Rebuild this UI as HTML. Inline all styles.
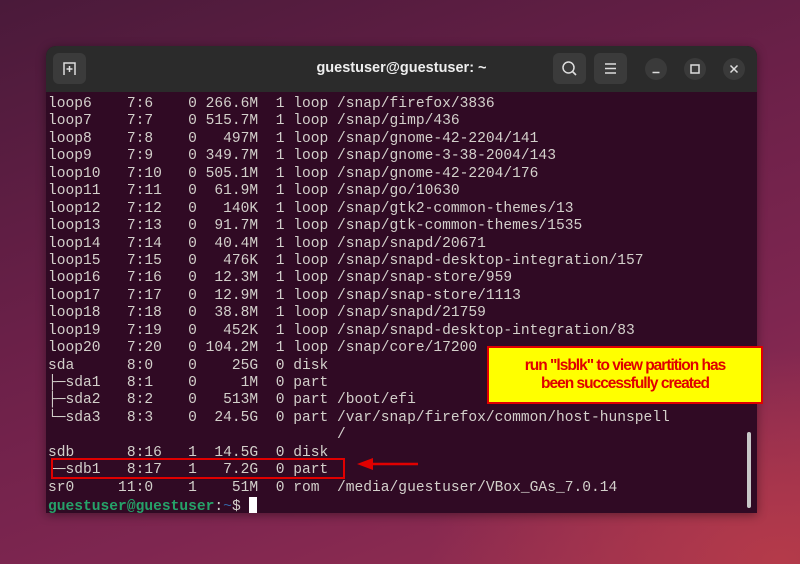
<!DOCTYPE html>
<html><head><meta charset="utf-8"><style>
html,body{margin:0;padding:0;width:800px;height:564px;overflow:hidden}
body{background:
radial-gradient(ellipse 300px 260px at 260px 280px,#7a2a5e 0%,rgba(122,42,94,0) 70%),
radial-gradient(ellipse 500px 300px at 780px 560px,#b43a4a 0%,rgba(180,58,74,0) 70%),
linear-gradient(160deg,#4a1a3a 0%,#6a2048 40%,#7e2650 70%,#9a3050 100%);position:relative;font-family:"Liberation Sans",sans-serif}
.win{position:absolute;left:46px;top:46px;width:711px;height:467px;background:#300a24;border-radius:10px 10px 0 0;overflow:hidden;box-shadow:0 2px 10px rgba(0,0,0,.4)}
.hdr{position:absolute;left:0;top:0;width:711px;height:46px;background:#2b2b2b}
.btn{position:absolute;top:7px;width:33px;height:31px;background:#3b3b3b;border-radius:6px}
.circ{position:absolute;top:12px;width:22px;height:22px;border-radius:50%;background:#3a3a3a}
.title{position:absolute;left:0;right:0;top:14px;text-align:center;color:#eee;font-weight:bold;font-size:14.5px}
pre{position:absolute;left:2px;top:50px;margin:0;font-family:"Liberation Mono","DejaVu Sans Mono",monospace;font-size:14.6px;line-height:17.43px;color:#d3d0cb}
.g{color:#26a269;font-weight:bold}.b{color:#3465a4}
.cur{display:inline-block;width:8px;height:16px;background:#fff;vertical-align:-3px}
.sb{position:absolute;left:701px;top:386px;width:4px;height:76px;background:#c8c8c8;border-radius:2px}
.note{position:absolute;left:487px;top:346px;width:272px;height:45px;background:#ffff00;border:2px solid #e00000;color:#e00000;font-weight:bold;font-size:15.5px;text-align:center;line-height:18px;padding-top:9px;letter-spacing:-1px;box-sizing:content-box}
.rect{position:absolute;left:51px;top:458px;width:290px;height:17px;border:2px solid #e00000}
</style></head><body>
<div class="win">
<div class="hdr">
<div class="btn" style="left:7px"><svg width="33" height="31" viewBox="0 0 33 31"><path d="M11 22V10h11v12" fill="none" stroke="#ddd" stroke-width="1.5"/><path d="M16.5 13v6M13.5 16h6" stroke="#ddd" stroke-width="1.5"/></svg></div>
<div class="title">guestuser@guestuser: ~</div>
<div class="btn" style="left:507px"><svg width="33" height="31" viewBox="0 0 33 31"><circle cx="15.5" cy="14.5" r="5.5" fill="none" stroke="#ddd" stroke-width="1.5"/><path d="M19.5 18.5l3.5 3.5" stroke="#ddd" stroke-width="1.6"/></svg></div>
<div class="btn" style="left:548px"><svg width="33" height="31" viewBox="0 0 33 31"><path d="M11 11h11M11 15.5h11M11 20h11" stroke="#ddd" stroke-width="1.5"/></svg></div>
<div class="circ" style="left:599px"><svg width="22" height="22"><path d="M7.5 14.5h7" stroke="#ddd" stroke-width="1.5"/></svg></div>
<div class="circ" style="left:638px"><svg width="22" height="22"><rect x="7" y="7" width="8" height="8" fill="none" stroke="#ddd" stroke-width="1.5"/></svg></div>
<div class="circ" style="left:677px"><svg width="22" height="22"><path d="M7.5 7.5l7 7M14.5 7.5l-7 7" stroke="#ddd" stroke-width="1.5"/></svg></div>
</div>
<pre>loop6    7:6    0 266.6M  1 loop /snap/firefox/3836
loop7    7:7    0 515.7M  1 loop /snap/gimp/436
loop8    7:8    0   497M  1 loop /snap/gnome-42-2204/141
loop9    7:9    0 349.7M  1 loop /snap/gnome-3-38-2004/143
loop10   7:10   0 505.1M  1 loop /snap/gnome-42-2204/176
loop11   7:11   0  61.9M  1 loop /snap/go/10630
loop12   7:12   0   140K  1 loop /snap/gtk2-common-themes/13
loop13   7:13   0  91.7M  1 loop /snap/gtk-common-themes/1535
loop14   7:14   0  40.4M  1 loop /snap/snapd/20671
loop15   7:15   0   476K  1 loop /snap/snapd-desktop-integration/157
loop16   7:16   0  12.3M  1 loop /snap/snap-store/959
loop17   7:17   0  12.9M  1 loop /snap/snap-store/1113
loop18   7:18   0  38.8M  1 loop /snap/snapd/21759
loop19   7:19   0   452K  1 loop /snap/snapd-desktop-integration/83
loop20   7:20   0 104.2M  1 loop /snap/core/17200
sda      8:0    0    25G  0 disk
├─sda1   8:1    0     1M  0 part
├─sda2   8:2    0   513M  0 part /boot/efi
└─sda3   8:3    0  24.5G  0 part /var/snap/firefox/common/host-hunspell
                                 /
sdb      8:16   1  14.5G  0 disk
└─sdb1   8:17   1   7.2G  0 part
sr0     11:0    1    51M  0 rom  /media/guestuser/VBox_GAs_7.0.14
<span class="g">guestuser@guestuser</span>:<span class="b">~</span>$ <span class="cur"></span></pre>
<div class="sb"></div>
</div>
<div class="rect"></div>
<svg style="position:absolute;left:355px;top:456px" width="66" height="16"><path d="M16 8H63" stroke="#e00000" stroke-width="2.5"/><path d="M2 8L18 2V14Z" fill="#e00000"/></svg>
<div class="note">run "lsblk" to view partition has<br>been successfully created</div>
</body></html>
